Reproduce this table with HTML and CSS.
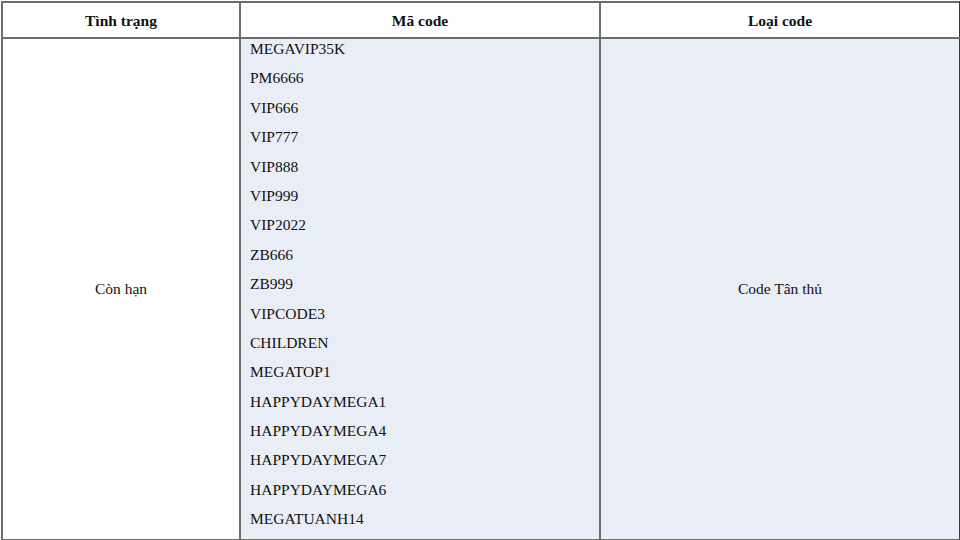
FILE: index.html
```html
<!DOCTYPE html>
<html lang="vi">
<head>
<meta charset="utf-8">
<title>Code</title>
<link rel="stylesheet" href="styles.css">
</head>
<body>
<table class="codes">
  <colgroup>
    <col class="c1">
    <col class="c2">
    <col class="c3">
  </colgroup>
  <thead>
    <tr>
      <th>Tình trạng</th>
      <th>Mã code</th>
      <th>Loại code</th>
    </tr>
  </thead>
  <tbody>
    <tr>
      <td class="status">Còn hạn</td>
      <td class="list">
        <p>MEGAVIP35K</p>
        <p>PM6666</p>
        <p>VIP666</p>
        <p>VIP777</p>
        <p>VIP888</p>
        <p>VIP999</p>
        <p>VIP2022</p>
        <p>ZB666</p>
        <p>ZB999</p>
        <p>VIPCODE3</p>
        <p>CHILDREN</p>
        <p>MEGATOP1</p>
        <p>HAPPYDAYMEGA1</p>
        <p>HAPPYDAYMEGA4</p>
        <p>HAPPYDAYMEGA7</p>
        <p>HAPPYDAYMEGA6</p>
        <p>MEGATUANH14</p>
      </td>
      <td class="type">Code Tân thủ</td>
    </tr>
  </tbody>
</table>
</body>
</html>
```
FILE: styles.css
```css
html, body {
  margin: 0;
  padding: 0;
  background: #ffffff;
}
body {
  font-family: "Liberation Serif", "Times New Roman", serif;
  font-size: 15.5px;
  color: #111111;
}
.codes {
  border-collapse: collapse;
  width: 958px;
  margin: 1px 0 0 1px;
  table-layout: fixed;
}
.c1 { width: 238px; }
.c2 { width: 360px; }
.c3 { width: 360px; }
.codes th,
.codes td {
  border: 2px solid #6e6e6e;
  padding: 0;
}
.codes th {
  height: 33px;
  padding-top: 1px;
  font-weight: bold;
  text-align: center;
  vertical-align: middle;
  background: #ffffff;
  color: #111111;
}
.codes td {
  vertical-align: middle;
}
.status {
  text-align: center;
  background: #ffffff;
}
.list {
  background: #e9edf5;
  vertical-align: top;
  padding-left: 9px !important;
}
.list p {
  margin: 0 0 9.4px 0;
  line-height: 20px;
}
.type {
  text-align: center;
  background: #e9edf5;
}
.codes th:last-child,
.codes td:last-child {
  border-right-color: #3a3a3a;
}
```
